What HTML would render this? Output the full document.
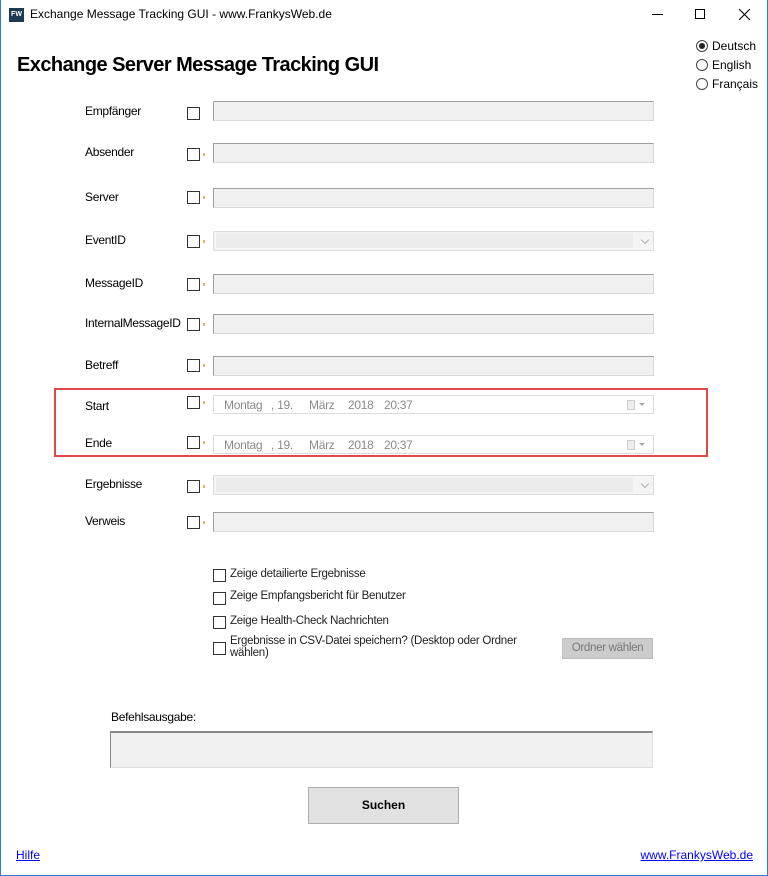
<!DOCTYPE html>
<html><head><meta charset="utf-8"><style>
*{box-sizing:border-box;margin:0;padding:0}
body{width:768px;height:876px;background:#fff;position:relative;overflow:hidden;font-family:"Liberation Sans",sans-serif;font-size:12px;color:#000}
.a{position:absolute}
.win{position:absolute;left:0;top:0;width:768px;height:876px;border:1px solid #2b79d0;border-top:none}
.lbl{position:absolute;left:85px;font-size:12px;letter-spacing:-0.3px}
.cb{position:absolute;left:187px;width:13px;height:13px;border:1px solid #333;background:#fff}
.dot{position:absolute;left:203px;width:2px;height:3px;background:#f0b060}
.tb{position:absolute;left:213px;width:441px;height:20px;background:#f0f0f0;border:1px solid #a0a0a0;border-bottom-color:#d8d8d8;border-right-color:#d8d8d8}
.cmb{position:absolute;left:213px;width:441px;height:20px;background:#f4f4f4;border:1px solid #dcdcdc}
.cmb i{position:absolute;left:2px;top:2px;right:20px;bottom:2px;background:#ececec}
.cmb b{position:absolute;right:5px;top:5px;width:6px;height:6px;border-right:1px solid #b0b0b0;border-bottom:1px solid #b0b0b0;transform:rotate(45deg)}
.dt{position:absolute;left:213px;width:441px;height:19px;background:#fff;border:1px solid #dcdcdc;color:#8a8a8a;font-size:12px;letter-spacing:-0.3px}
.dt span{position:absolute;top:2px}
.ck{position:absolute;left:213px;width:13px;height:13px;border:1px solid #333;background:#fff}
.ct{position:absolute;left:230px;font-size:11.5px;letter-spacing:-0.25px;color:#222}
.rd{position:absolute;left:696px;width:12px;height:12px;border:1px solid #444;border-radius:50%;background:#fff}
.rt{position:absolute;left:712px;font-size:12px}
</style></head><body>
<div class="win"></div>
<div class="a" style="left:9px;top:8px;width:15px;height:14px;background:#1c3a50;color:#fff;font-size:7px;font-weight:bold;text-align:center;line-height:14px">FW</div>
<div class="a" style="left:30px;top:7px;font-size:12px;color:#000">Exchange Message Tracking GUI - www.FrankysWeb.de</div>
<div class="a" style="left:652px;top:14px;width:11px;height:1px;background:#000"></div>
<div class="a" style="left:695px;top:9px;width:10px;height:10px;border:1px solid #000"></div>
<svg class="a" style="left:739px;top:9px" width="11" height="11"><path d="M0 0L11 11M11 0L0 11" stroke="#000" stroke-width="1.1"/></svg>
<div class="a" style="left:17px;top:54px;font-size:20px;font-weight:bold;letter-spacing:-0.55px">Exchange Server Message Tracking GUI</div>

<div class="rd" style="top:40px"></div><div class="a" style="left:699px;top:43px;width:6px;height:6px;border-radius:50%;background:#222"></div><div class="rt" style="top:39px">Deutsch</div>
<div class="rd" style="top:59px"></div><div class="rt" style="top:58px">English</div>
<div class="rd" style="top:78px"></div><div class="rt" style="top:77px">Français</div>

<div class="lbl" style="top:104px">Empfänger</div><div class="cb" style="top:107px"></div><div class="tb" style="top:101px"></div>
<div class="lbl" style="top:145px">Absender</div><div class="cb" style="top:148px"></div><div class="dot" style="top:153px"></div><div class="tb" style="top:143px"></div>
<div class="lbl" style="top:190px">Server</div><div class="cb" style="top:191px"></div><div class="dot" style="top:196px"></div><div class="tb" style="top:188px"></div>
<div class="lbl" style="top:233px">EventID</div><div class="cb" style="top:235px"></div><div class="dot" style="top:240px"></div><div class="cmb" style="top:231px"><i></i><b></b></div>
<div class="lbl" style="top:276px">MessageID</div><div class="cb" style="top:278px"></div><div class="dot" style="top:283px"></div><div class="tb" style="top:274px"></div>
<div class="lbl" style="top:316px">InternalMessageID</div><div class="cb" style="top:318px"></div><div class="dot" style="top:323px"></div><div class="tb" style="top:314px"></div>
<div class="lbl" style="top:358px">Betreff</div><div class="cb" style="top:359px"></div><div class="dot" style="top:364px"></div><div class="tb" style="top:356px"></div>

<div class="a" style="left:54px;top:388px;width:654px;height:69px;border:2px solid #e04848"></div>
<div class="lbl" style="top:399px">Start</div><div class="cb" style="top:396px"></div><div class="dot" style="top:401px"></div>
<div class="dt" style="top:395px"><span style="left:10px">Montag</span><span style="left:57px">, 19.</span><span style="left:95px">März</span><span style="left:134px">2018</span><span style="left:170px">20:37</span><span style="left:413px;top:4px;width:8px;height:10px;border:1px solid #ccc;background:#eee"></span><span style="left:425px;top:7px;border:3px solid transparent;border-top-color:#aaa"></span></div>
<div class="lbl" style="top:436px">Ende</div><div class="cb" style="top:436px"></div><div class="dot" style="top:441px"></div>
<div class="dt" style="top:435px"><span style="left:10px">Montag</span><span style="left:57px">, 19.</span><span style="left:95px">März</span><span style="left:134px">2018</span><span style="left:170px">20:37</span><span style="left:413px;top:4px;width:8px;height:10px;border:1px solid #ccc;background:#eee"></span><span style="left:425px;top:7px;border:3px solid transparent;border-top-color:#aaa"></span></div>

<div class="lbl" style="top:477px">Ergebnisse</div><div class="cb" style="top:480px"></div><div class="dot" style="top:485px"></div><div class="cmb" style="top:475px"><i></i><b></b></div>
<div class="lbl" style="top:514px">Verweis</div><div class="cb" style="top:516px"></div><div class="dot" style="top:521px"></div><div class="tb" style="top:512px"></div>

<div class="ck" style="top:569px"></div><div class="ct" style="top:568px">Zeige detailierte Ergebnisse</div>
<div class="ck" style="top:592px"></div><div class="ct" style="top:590px">Zeige Empfangsbericht für Benutzer</div>
<div class="ck" style="top:616px"></div><div class="ct" style="top:615px">Zeige Health-Check Nachrichten</div>
<div class="ck" style="top:642px"></div><div class="ct" style="top:635px;line-height:12px;width:300px">Ergebnisse in CSV-Datei speichern? (Desktop oder Ordner wählen)</div>
<div class="a" style="left:562px;top:638px;width:91px;height:21px;background:#cccccc;border:1px solid #bdbdbd;color:#777;text-align:center;line-height:19px;font-size:11.5px;letter-spacing:-0.3px">Ordner wählen</div>

<div class="a" style="left:111px;top:710px;font-size:12px;letter-spacing:-0.3px">Befehlsausgabe:</div>
<div class="a" style="left:110px;top:731px;width:543px;height:37px;background:#f0f0f0;border:1px solid #e0e0e0;border-top:2px solid #888;border-left:1px solid #888"></div>
<div class="a" style="left:308px;top:787px;width:151px;height:37px;background:#e1e1e1;border:1px solid #adadad;text-align:center;line-height:35px;font-weight:bold;font-size:12px">Suchen</div>
<div class="a" style="left:16px;top:848px;color:#0000ff;text-decoration:underline">Hilfe</div>
<div class="a" style="right:15px;top:848px;color:#0000ff;text-decoration:underline">www.FrankysWeb.de</div>
</body></html>
